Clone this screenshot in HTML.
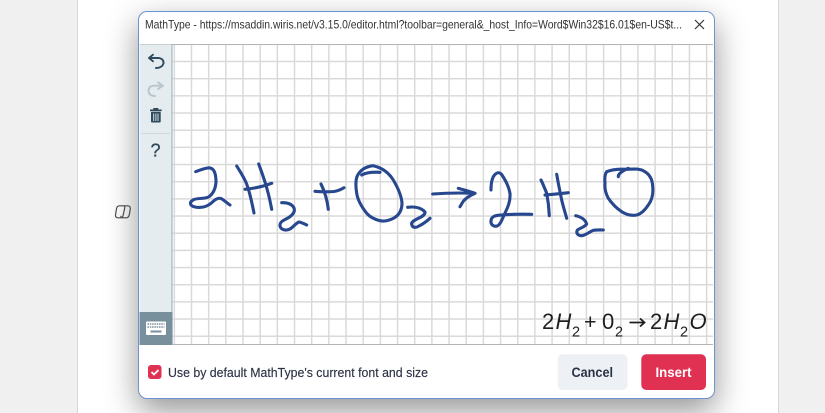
<!DOCTYPE html>
<html><head><meta charset="utf-8">
<style>
html,body{margin:0;padding:0;width:825px;height:413px;overflow:hidden;background:#f0f0f0}
body{position:relative}
#page{position:absolute;left:77px;top:0;width:700px;height:413px;background:#fff;border-left:1px solid #d6d6d6;border-right:1px solid #d6d6d6}
#dlg{position:absolute;left:138px;top:11px;width:575px;height:386px;border:1px solid #6f93cf;border-radius:9px;background:#fff;box-shadow:0 12px 32px rgba(0,0,0,.42)}
svg{position:absolute;left:0;top:0;filter:blur(.3px)}
text{font-family:"Liberation Sans",sans-serif}
</style></head>
<body>
<div id="page"></div>
<div id="dlg"></div>
<svg width="825" height="413" viewBox="0 0 825 413">
<defs>
<pattern id="g" patternUnits="userSpaceOnUse" x="173.600" y="43.600" width="17.170" height="17.170">
<path d="M0.700 0V17.170M0 0.700H17.170" stroke="#d9d9d9" stroke-width="1.500" fill="none"/>
</pattern>
</defs>
<!-- copilot icon -->
<g fill="none" stroke="#4a4a4a" stroke-width="1.200">
<path d="M119.500 205.800h3.500q2 0 1.800 2l-1.800 8q-.6 2-2.500 2h-2.500q-2.800 0-2.500-3l1-6q.5-3 3-3z"/>
<path d="M124 205.800h3.500q3 0 2.800 3l-1 6q-.6 3-3 3h-3.800q-1.800 0-1.600-2"/>
</g>
<!-- title -->
<text x="145" y="28.500" font-size="12" fill="#333" textLength="537" lengthAdjust="spacingAndGlyphs">MathType - https://msaddin.wiris.net/v3.15.0/editor.html?toolbar=general&amp;_host_Info=Word$Win32$16.01$en-US$t...</text>
<path d="M695 20l9 9M704 20l-9 9" stroke="#333" stroke-width="1.200" fill="none"/>
<!-- canvas grid -->
<rect x="172.500" y="44" width="540.500" height="300.500" fill="#fff"/>
<rect x="172.500" y="44" width="540.500" height="300.500" fill="url(#g)"/>
<path d="M139.500 44.500H713M173 344.500H713" stroke="#b3b3b3" stroke-width="1" fill="none"/>
<!-- sidebar -->
<rect x="139.500" y="44.500" width="32.500" height="300" fill="#e4ecf0"/>
<path d="M172 44.500V345" stroke="#a3b8c4" stroke-width="1.200"/>
<path d="M141 133.500H170" stroke="#cfd8dc" stroke-width="1"/>
<g fill="none" stroke-linecap="round" stroke-linejoin="round">
<path d="M153 54.700L149 58L153 61.300M149 58H159Q164 59 163.500 63.500Q162 68 156 68" stroke="#2f4a5c" stroke-width="1.900"/>
<path d="M158 82.300L163 85.700L158 89M163 85.700H154Q148.500 86 148.500 91Q149 96 155 96" stroke="#b9c6cd" stroke-width="1.900"/>
</g>
<g fill="#2f4a5c">
<path d="M151 111.800h9.700v9.700q0 1-1 1h-7.700q-1 0-1-1z"/>
<rect x="150" y="109.500" width="11.700" height="1.600"/>
<rect x="153.300" y="108" width="5" height="1.600"/>
</g>
<path d="M153.700 113.500v7.500M155.900 113.500v7.500M158 113.500v7.500" stroke="#e4ecf0" stroke-width=".9"/>
<text x="150.500" y="156.500" font-size="18" fill="#2f4a5c" stroke="#2f4a5c" stroke-width=".3">?</text>
<!-- keyboard -->
<rect x="139.500" y="312" width="33" height="33" fill="#78909c"/>
<rect x="146" y="321.500" width="20" height="13.500" fill="#fff" rx="1"/>
<path d="M147.500 324h17M147.500 327h17" stroke="#78909c" stroke-width="1.400" stroke-dasharray="1.500 .8"/>
<rect x="150.500" y="330.500" width="11" height="2" fill="#78909c"/>
<!-- strokes -->
<g fill="none" stroke="#27478e" stroke-width="3.100" stroke-linecap="round" stroke-linejoin="round">
<path d="M195.700 171.700C200 170 205 168 209 167.800C214 168 216 174 216 182C215.500 189 213 194 208.500 197C203 199.500 197 197.500 193 200C189 202.500 190 206 195 207C202 208.500 208 206 212 202.500C215 199.500 218 197.500 221 198.500C224 200 227 203 230 205"/>
<path d="M236.700 166C241 173 245 179 247 185C250 193 252 203 254 213"/>
<path d="M245 189.300C254 188.500 263 186.500 271.700 183.300"/>
<path d="M258.700 164C262 173 265 181 267.300 190C269 196 270.500 203 271.700 209.300"/>
<path d="M281.700 202.700C287 202.500 292 204 294 208C295.500 212 292 215.500 288 218C283 220.500 279.500 222 280 226C281 230 286 231 290 229C294 226.500 296 223 299 222C302 222.500 304.500 224 306.700 225"/>
<path d="M315 191.300C322 192 328 192 334 191.500C338 191 341 189.500 344 187.700"/>
<path d="M321 184C324 190 327 198 328.300 209.300"/>
<path d="M373.300 165.700C383 168 389 173 393.300 180C398 188 401.500 196 402 203C402 211 398 216 393 218.500C388 221 384 221.500 380 220.700C375 219.500 370 217 366.700 213.300C361 206 357.500 199 356.700 193.300C355.500 186 355.500 181 357 176.500C360 170 366 166.500 373.300 165.700Z"/>
<path d="M361.700 175C366 172.500 373 172 380 172.300"/>
<path d="M407.700 207.300C414 206.500 421 207.500 425 212C425.500 215 421 217 418 218.500C414 220.500 411 222 411.700 224.500C412.500 228 416 228 419 226C423 224 427 221 430 218.300"/>
<path d="M432.700 194C446 193 460 192.700 475 193.300M458.300 188.300C464 190 470 191.500 475 193.300C470 195.500 466 198 463.500 201C462 203 461 205 460 206.700"/>
<path d="M491 190C491 183 492 178 494.500 175C497 172 500 172 502 175C506 181 509 187 510 193.500C510.500 201 508 207 505 213C502 220 500 225 497 226C493 227 490.500 224 491 220.500C491.500 217 494 215.800 498 215.300C508 214.300 520 214 531.700 214.300"/>
<path d="M541 180C543 184 545 189 546.700 193.300C548 200 549 208 549.300 215.700"/>
<path d="M545 195C553 194.500 561 193.500 568.300 192.700"/>
<path d="M556.700 174.300C558 182 560 192 561.700 200C563 206 565 212 566.700 218.300"/>
<path d="M575.700 215.700C580 216.500 585 219 586.700 224C585 227 580 228 577.500 230C575.500 233 578 236 582 235.700C586 235 590 231.500 593.300 230.300C596 229.800 600 230 603.300 230"/>
<path d="M606.700 171.700C613 169 620 169 627 169.300C633 169 639 168.500 643.300 170.700C650 174 652.500 180 652.700 186.700C653.500 194 652 200 648.300 205C645 210 641 214 636.700 215C631 216 626 214.500 621.700 211.700C616 208 611.500 203 608.300 198.300C605.500 193 604.500 188 605 183.300C604.500 178 605 174 606.700 171.700Z"/>
<path d="M618.300 176.700C618 174 622 171 628.300 168.300"/>
</g>
<!-- rendered math -->
<g fill="#1f1f1f">
<text x="542" y="329" font-size="22">2</text>
<text x="555.500" y="329" font-size="22" font-style="italic">H</text>
<text x="572" y="336.500" font-size="14.500">2</text>
<text x="584" y="329" font-size="21.500">+</text>
<text x="602" y="329" font-size="22">0</text>
<text x="615" y="336.500" font-size="14.500">2</text>
<text x="650" y="329" font-size="22">2</text>
<text x="663.500" y="329" font-size="22" font-style="italic">H</text>
<text x="680" y="336.500" font-size="14.500">2</text>
<text x="689.500" y="329" font-size="22" font-style="italic">O</text>
</g>
<path d="M629.500 322.500H644M640 318.500l4.500 4-4.500 4" stroke="#1f1f1f" stroke-width="1.800" fill="none"/>
<!-- footer -->
<rect x="148" y="365" width="13.500" height="14" rx="3" fill="#e03152"/>
<path d="M151.500 372l2.500 2.500 4.500-4.500" stroke="#fff" stroke-width="1.800" fill="none"/>
<text x="168" y="377" font-size="12.500" fill="#2c3345" stroke="#2c3345" stroke-width=".15" textLength="260" lengthAdjust="spacingAndGlyphs">Use by default MathType's current font and size</text>
<rect x="557.700" y="354.300" width="69.800" height="35.700" rx="5" fill="#edf1f6"/>
<rect x="641.300" y="354.300" width="64.700" height="35.700" rx="5" fill="#e03152"/>
<text x="571.500" y="377" font-size="13.500" font-weight="bold" fill="#2c3345" textLength="41.500" lengthAdjust="spacingAndGlyphs">Cancel</text>
<text x="655.500" y="377" font-size="13.500" font-weight="bold" fill="#fff" textLength="36" lengthAdjust="spacingAndGlyphs">Insert</text>
</svg>
</body></html>
